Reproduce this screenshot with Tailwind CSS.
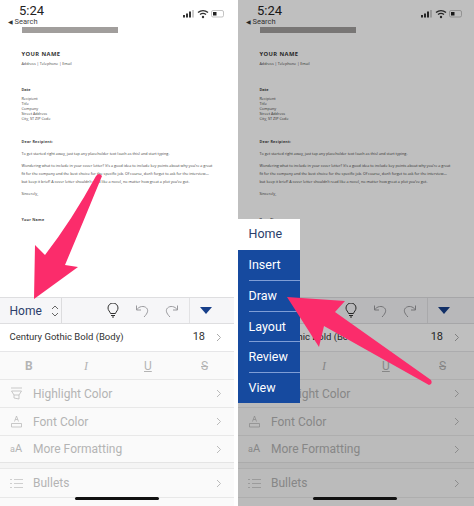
<!DOCTYPE html>
<html lang="en">
<head>
  <meta charset="UTF-8">
  <title>Word mobile ribbon tabs</title>
  <script src="https://cdn.jsdelivr.net/npm/@tailwindcss/browser@4"></script>
</head>
<body class="bg-white font-['Roboto',sans-serif]">
  <div class="relative w-[474px] h-[506px] overflow-hidden flex bg-white">

    <!-- Left phone -->
    <div class="relative w-[238px] h-[506px] shrink-0 overflow-hidden flex flex-col">
      <!-- Status bar -->
      <div class="h-[27px] relative shrink-0">
        <span class="absolute left-[19px] top-[4px] text-[13px] leading-[13px] font-normal text-[#222]">5:24</span>
        <span class="absolute left-[8px] top-[17px] text-[6px] leading-[9px] text-[#333]">◀ <span class="text-[7.5px] text-[#444]">Search</span></span>
        <svg class="absolute left-[183px] top-[9px]" width="42" height="10" viewBox="0 0 42 10">
          <rect x="0" y="6" width="2" height="2.5" fill="#333"/><rect x="3" y="4.5" width="2" height="4" fill="#333"/><rect x="6" y="2.5" width="2" height="6" fill="#333"/><rect x="9" y="1" width="2" height="7.5" fill="#ccc"/>
          <path d="M15 3.5a8 8 0 0 1 10 0M17 5.5a5 5 0 0 1 6 0" fill="none" stroke="#333" stroke-width="1.4"/><circle cx="20" cy="8" r="1.2" fill="#333"/>
          <rect x="28.5" y="1.5" width="12" height="6.5" rx="1.5" fill="none" stroke="#aaa" stroke-width=".7"/><rect x="30" y="3" width="3.5" height="3.5" fill="#222"/>
        </svg>
      </div>
      <!-- Document -->
      <div class="h-[270px] shrink-0 pl-[21.5px] font-['Open_Sans',sans-serif] text-[#444] text-[3.75px] leading-[5px] whitespace-nowrap">
        <div class="w-[96px] h-[6px] bg-[#a19e9c]"></div>
        <p class="mt-[17px] text-[5.8px] leading-[8px] font-bold tracking-[.4px] text-[#333]">YOUR NAME</p>
        <p class="mt-[3px]">Address | Telephone | Email</p>
        <p class="mt-[21px] font-bold">Date</p>
        <p class="mt-[4px]">Recipient</p>
        <p>Title</p>
        <p>Company</p>
        <p>Street Address</p>
        <p>City, ST ZIP Code</p>
        <p class="mt-[18px] font-bold tracking-[.2px]">Dear Recipient:</p>
        <p class="mt-[7px]">To get started right away, just tap any placeholder text (such as this) and start typing.</p>
        <p class="mt-[7px]">Wondering what to include in your cover letter? It’s a good idea to include key points about why you’re a great</p>
        <p class="mt-[3px]">fit for the company and the best choice for the specific job. Of course, don’t forget to ask for the interview—</p>
        <p class="mt-[3px]">but keep it brief! A cover letter shouldn’t read like a novel, no matter how great a plot you’ve got.</p>
        <p class="mt-[7px]">Sincerely,</p>
        <p class="mt-[21px] font-bold tracking-[.2px]">Your Name</p>
      </div>
      <!-- Toolbar -->
      <div class="w-[234px] h-[27px] shrink-0 flex items-center bg-[#f6f6f8] border-y border-[#dedee0]">
        <div class="w-[62px] h-full flex items-center pl-[9.5px] border-r border-[#dcdcde] text-[12px] text-[#2c3e6b]">
          Home
          <svg class="ml-[9px]" width="8" height="14" viewBox="0 0 8 14" fill="none" stroke="#666" stroke-width="1"><path d="M1 5l3-3 3 3M1 9l3 3 3-3"/></svg>
        </div>
        <svg class="ml-[44px]" width="14" height="15" viewBox="0 0 14 15" fill="none" stroke="#333" stroke-width="1"><path d="M4.5 10.5C4 8.5 2 7.5 2 5a5 5 0 0 1 10 0c0 2.5-2 3.500-2.500 5.500zM5 12.500h4M6 14h2"/></svg>
        <svg class="ml-[15px]" width="14" height="14" viewBox="0 0 14 14" fill="none" stroke="#9a9a9e" stroke-width="1"><path d="M1.5 1.5v4.5h4.5M1.5 6C4 2 9 1.5 11.5 4c2 2 1.500 5-2.500 9"/></svg>
        <svg class="ml-[16px]" width="14" height="14" viewBox="0 0 14 14" fill="none" stroke="#9a9a9e" stroke-width="1"><path d="M12.5 1.5v4.5h-4.5M12.5 6C10 2 5 1.5 2.5 4c-2 2-1.500 5 2.500 9"/></svg>
        <div class="ml-[10px] h-full border-l border-[#e2e2e4] pl-[10px] flex items-center">
          <svg width="12" height="7" viewBox="0 0 12 7"><path d="M0 0h12L6 7z" fill="#173f8a"/></svg>
        </div>
      </div>
      <!-- Font row -->
      <div class="w-[234px] h-[28px] shrink-0 flex items-center pl-[9.5px] pr-[12px] bg-white border-b border-[#e6e6e8] text-[#333]">
        <span class="text-[9.5px] flex-1">Century Gothic Bold (Body)</span>
        <span class="text-[11px] mr-[11px]">18</span>
        <svg width="6" height="9" viewBox="0 0 6 9" fill="none" stroke="#aaa" stroke-width="1"><path d="M1 1l3.5 3.5L1 8"/></svg>
      </div>
      <!-- Style row -->
      <div class="w-[234px] h-[28px] shrink-0 flex items-center bg-[#fafafa] border-b border-[#e8e8e8] text-[#b4b4b4] text-[12px]">
        <span class="w-[59px] pl-[25px] font-bold">B</span>
        <span class="w-[59px] pl-[25px] italic font-['Liberation_Serif',serif]">I</span>
        <span class="w-[59px] pl-[26px] underline">U</span>
        <span class="pl-[24px] line-through">S</span>
      </div>
      <!-- Formatting rows -->
      <div class="w-[234px] h-[28px] shrink-0 flex items-center pl-[10px] pr-[12px] bg-[#fafafa] border-b border-[#e8e8e8] text-[#b4b4b4] text-[12px]">
        <svg class="w-[13px]" width="13" height="13" viewBox="0 0 13 13" fill="none" stroke="#bbb" stroke-width=".8"><path d="M1 1h11M1.5 4h10L9 8H4zM4 8v3l5 1V8"/></svg>
        <span class="ml-[10px] flex-1">Highlight Color</span>
        <svg width="6" height="9" viewBox="0 0 6 9" fill="none" stroke="#bbb" stroke-width="1"><path d="M1 1l3.5 3.5L1 8"/></svg>
      </div>
      <div class="w-[234px] h-[28px] shrink-0 flex items-center pl-[10px] pr-[12px] bg-[#fafafa] border-b border-[#e8e8e8] text-[#b4b4b4] text-[12px]">
        <svg class="w-[13px]" width="13" height="13" viewBox="0 0 13 13" fill="none" stroke="#bbb" stroke-width=".8"><path d="M4.5 6.5L6.5 1l2 5.5M5.2 4.5h2.6M1.5 8.5h10v3.5h-10z"/></svg>
        <span class="ml-[10px] flex-1">Font Color</span>
        <svg width="6" height="9" viewBox="0 0 6 9" fill="none" stroke="#bbb" stroke-width="1"><path d="M1 1l3.5 3.5L1 8"/></svg>
      </div>
      <div class="w-[234px] h-[27px] shrink-0 flex items-center pl-[10px] pr-[12px] bg-[#fafafa] border-b border-[#e4e4e4] text-[#b4b4b4] text-[12px]">
        <span class="w-[13px] text-[11px] whitespace-nowrap"><span class="text-[9px]">a</span>A</span>
        <span class="ml-[10px] flex-1">More Formatting</span>
        <svg width="6" height="9" viewBox="0 0 6 9" fill="none" stroke="#bbb" stroke-width="1"><path d="M1 1l3.5 3.5L1 8"/></svg>
      </div>
      <div class="w-[234px] h-[6px] shrink-0 bg-[#f4f4f4] border-b border-[#e8e8e8]"></div>
      <div class="w-[234px] h-[29px] shrink-0 flex items-center pl-[10px] pr-[12px] bg-[#fafafa] border-b border-[#e8e8e8] text-[#b4b4b4] text-[12px]">
        <svg class="w-[13px]" width="13" height="11" viewBox="0 0 13 11" fill="none" stroke="#c4c4c4" stroke-width=".8"><path d="M0 1.5h2M4 1.5h9M0 5.5h2M4 5.5h9M0 9.5h2M4 9.5h9"/></svg>
        <span class="ml-[10px] flex-1">Bullets</span>
        <svg width="6" height="9" viewBox="0 0 6 9" fill="none" stroke="#bbb" stroke-width="1"><path d="M1 1l3.5 3.5L1 8"/></svg>
      </div>
      <div class="w-[234px] flex-1 bg-[#fafafa]"></div>
      <div class="absolute left-[75px] top-[497px] w-[84px] h-[3px] rounded-full bg-[#111]"></div>
    </div>

    <!-- Right phone -->
    <div class="relative w-[236px] h-[506px] shrink-0 overflow-hidden flex flex-col">
      <div class="h-[27px] relative shrink-0">
        <span class="absolute left-[19px] top-[4px] text-[13px] leading-[13px] font-normal text-[#222]">5:24</span>
        <span class="absolute left-[8px] top-[17px] text-[6px] leading-[9px] text-[#333]">◀ <span class="text-[7.5px] text-[#444]">Search</span></span>
        <svg class="absolute left-[183px] top-[9px]" width="42" height="10" viewBox="0 0 42 10">
          <rect x="0" y="6" width="2" height="2.5" fill="#333"/><rect x="3" y="4.5" width="2" height="4" fill="#333"/><rect x="6" y="2.5" width="2" height="6" fill="#333"/><rect x="9" y="1" width="2" height="7.5" fill="#ccc"/>
          <path d="M15 3.5a8 8 0 0 1 10 0M17 5.5a5 5 0 0 1 6 0" fill="none" stroke="#333" stroke-width="1.4"/><circle cx="20" cy="8" r="1.2" fill="#333"/>
          <rect x="28.5" y="1.5" width="12" height="6.5" rx="1.5" fill="none" stroke="#aaa" stroke-width=".7"/><rect x="30" y="3" width="3.5" height="3.5" fill="#222"/>
        </svg>
      </div>
      <div class="h-[270px] shrink-0 pl-[21.5px] font-['Open_Sans',sans-serif] text-[#444] text-[3.75px] leading-[5px] whitespace-nowrap">
        <div class="w-[96px] h-[6px] bg-[#a19e9c]"></div>
        <p class="mt-[17px] text-[5.8px] leading-[8px] font-bold tracking-[.4px] text-[#333]">YOUR NAME</p>
        <p class="mt-[3px]">Address | Telephone | Email</p>
        <p class="mt-[21px] font-bold">Date</p>
        <p class="mt-[4px]">Recipient</p>
        <p>Title</p>
        <p>Company</p>
        <p>Street Address</p>
        <p>City, ST ZIP Code</p>
        <p class="mt-[18px] font-bold tracking-[.2px]">Dear Recipient:</p>
        <p class="mt-[7px]">To get started right away, just tap any placeholder text (such as this) and start typing.</p>
        <p class="mt-[7px]">Wondering what to include in your cover letter? It’s a good idea to include key points about why you’re a great</p>
        <p class="mt-[3px]">fit for the company and the best choice for the specific job. Of course, don’t forget to ask for the interview—</p>
        <p class="mt-[3px]">but keep it brief! A cover letter shouldn’t read like a novel, no matter how great a plot you’ve got.</p>
        <p class="mt-[7px]">Sincerely,</p>
        <p class="mt-[21px] font-bold tracking-[.2px]">Your Name</p>
      </div>
      <div class="w-full h-[27px] shrink-0 flex items-center bg-[#f6f6f8] border-y border-[#dedee0]">
        <div class="w-[62px] h-full"></div>
        <svg class="ml-[44px]" width="14" height="15" viewBox="0 0 14 15" fill="none" stroke="#333" stroke-width="1"><path d="M4.5 10.5C4 8.5 2 7.5 2 5a5 5 0 0 1 10 0c0 2.5-2 3.5-2.5 5.5zM5 12.5h4M6 14h2"/></svg>
        <svg class="ml-[15px]" width="14" height="14" viewBox="0 0 14 14" fill="none" stroke="#9a9a9e" stroke-width="1"><path d="M1.5 1.5v4.5h4.5M1.5 6C4 2 9 1.5 11.5 4c2 2 1.5 5-2.5 9"/></svg>
        <svg class="ml-[16px]" width="14" height="14" viewBox="0 0 14 14" fill="none" stroke="#9a9a9e" stroke-width="1"><path d="M12.5 1.5v4.5h-4.5M12.5 6C10 2 5 1.5 2.5 4c-2 2-1.5 5 2.5 9"/></svg>
        <div class="ml-[10px] h-full border-l border-[#e2e2e4] pl-[10px] flex items-center">
          <svg width="12" height="7" viewBox="0 0 12 7"><path d="M0 0h12L6 7z" fill="#173f8a"/></svg>
        </div>
      </div>
      <div class="w-full h-[28px] shrink-0 flex items-center pl-[9.5px] pr-[14px] bg-white border-b border-[#e6e6e8] text-[#333]">
        <span class="text-[9.5px] flex-1">Century Gothic Bold (Body)</span>
        <span class="text-[11px] mr-[11px]">18</span>
        <svg width="6" height="9" viewBox="0 0 6 9" fill="none" stroke="#aaa" stroke-width="1"><path d="M1 1l3.5 3.5L1 8"/></svg>
      </div>
      <div class="w-full h-[28px] shrink-0 flex items-center bg-[#fafafa] border-b border-[#e8e8e8] text-[#b4b4b4] text-[12px]">
        <span class="w-[59px] pl-[25px] font-bold">B</span>
        <span class="w-[59px] pl-[25px] italic font-['Liberation_Serif',serif]">I</span>
        <span class="w-[59px] pl-[26px] underline">U</span>
        <span class="pl-[24px] line-through">S</span>
      </div>
      <div class="w-full h-[28px] shrink-0 flex items-center pl-[10px] pr-[14px] bg-[#fafafa] border-b border-[#e8e8e8] text-[#b4b4b4] text-[12px]">
        <svg class="w-[13px]" width="13" height="13" viewBox="0 0 13 13" fill="none" stroke="#bbb" stroke-width=".8"><path d="M1 1h11M1.5 4h10L9 8H4zM4 8v3l5 1V8"/></svg>
        <span class="ml-[10px] flex-1">Highlight Color</span>
        <svg width="6" height="9" viewBox="0 0 6 9" fill="none" stroke="#bbb" stroke-width="1"><path d="M1 1l3.5 3.5L1 8"/></svg>
      </div>
      <div class="w-full h-[28px] shrink-0 flex items-center pl-[10px] pr-[14px] bg-[#fafafa] border-b border-[#e8e8e8] text-[#b4b4b4] text-[12px]">
        <svg class="w-[13px]" width="13" height="13" viewBox="0 0 13 13" fill="none" stroke="#bbb" stroke-width=".8"><path d="M4.5 6.5L6.5 1l2 5.5M5.2 4.5h2.6M1.5 8.5h10v3.5h-10z"/></svg>
        <span class="ml-[10px] flex-1">Font Color</span>
        <svg width="6" height="9" viewBox="0 0 6 9" fill="none" stroke="#bbb" stroke-width="1"><path d="M1 1l3.5 3.5L1 8"/></svg>
      </div>
      <div class="w-full h-[27px] shrink-0 flex items-center pl-[10px] pr-[14px] bg-[#fafafa] border-b border-[#e4e4e4] text-[#b4b4b4] text-[12px]">
        <span class="w-[13px] text-[11px] whitespace-nowrap"><span class="text-[9px]">a</span>A</span>
        <span class="ml-[10px] flex-1">More Formatting</span>
        <svg width="6" height="9" viewBox="0 0 6 9" fill="none" stroke="#bbb" stroke-width="1"><path d="M1 1l3.5 3.5L1 8"/></svg>
      </div>
      <div class="w-full h-[6px] shrink-0 bg-[#f4f4f4] border-b border-[#e8e8e8]"></div>
      <div class="w-full h-[29px] shrink-0 flex items-center pl-[10px] pr-[14px] bg-[#fafafa] border-b border-[#e8e8e8] text-[#b4b4b4] text-[12px]">
        <svg class="w-[13px]" width="13" height="11" viewBox="0 0 13 11" fill="none" stroke="#c4c4c4" stroke-width=".8"><path d="M0 1.5h2M4 1.5h9M0 5.5h2M4 5.5h9M0 9.5h2M4 9.5h9"/></svg>
        <span class="ml-[10px] flex-1">Bullets</span>
        <svg width="6" height="9" viewBox="0 0 6 9" fill="none" stroke="#bbb" stroke-width="1"><path d="M1 1l3.5 3.5L1 8"/></svg>
      </div>
      <div class="w-full flex-1 bg-[#fafafa]"></div>
      <!-- Dimming layer -->
      <div class="absolute inset-0 bg-black/25"></div>
      <div class="absolute left-[75px] top-[497px] w-[84px] h-[3px] rounded-full bg-[#111]"></div>
      <!-- Tab menu -->
      <div class="absolute left-0 top-[219px] w-[62px] flex flex-col bg-[#164a9f] text-white text-[12.5px]">
        <div class="h-[31px] flex items-center pl-[10.5px] bg-white text-[#2c3e6b]">Home</div>
        <div class="ml-[10.5px] h-[31px] pt-px flex items-center border-b border-[#7f9ed6]">Insert</div>
        <div class="ml-[10.5px] h-[31px] pt-px flex items-center border-b border-[#7f9ed6]">Draw</div>
        <div class="ml-[10.5px] h-[30px] pt-px flex items-center border-b border-[#7f9ed6]">Layout</div>
        <div class="ml-[10.5px] h-[31px] pt-px flex items-center border-b border-[#7f9ed6]">Review</div>
        <div class="ml-[10.5px] h-[30px] pt-px flex items-center">View</div>
      </div>
    </div>

    <!-- Annotation arrows -->
    <svg class="absolute left-0 top-0 pointer-events-none" width="474" height="506" viewBox="0 0 474 506">
      <path d="M96 176Q99 172 102 176Q84 220 65 265L78 267L34 299L35 245L45 255Q72 220 96 176z" fill="#fb2c6b"/>
      <path d="M287 297L345 301L335 312L431 380Q433 384 429 385L324 326L319 347z" fill="#fb2c6b"/>
    </svg>
  </div>
</body>
</html>
